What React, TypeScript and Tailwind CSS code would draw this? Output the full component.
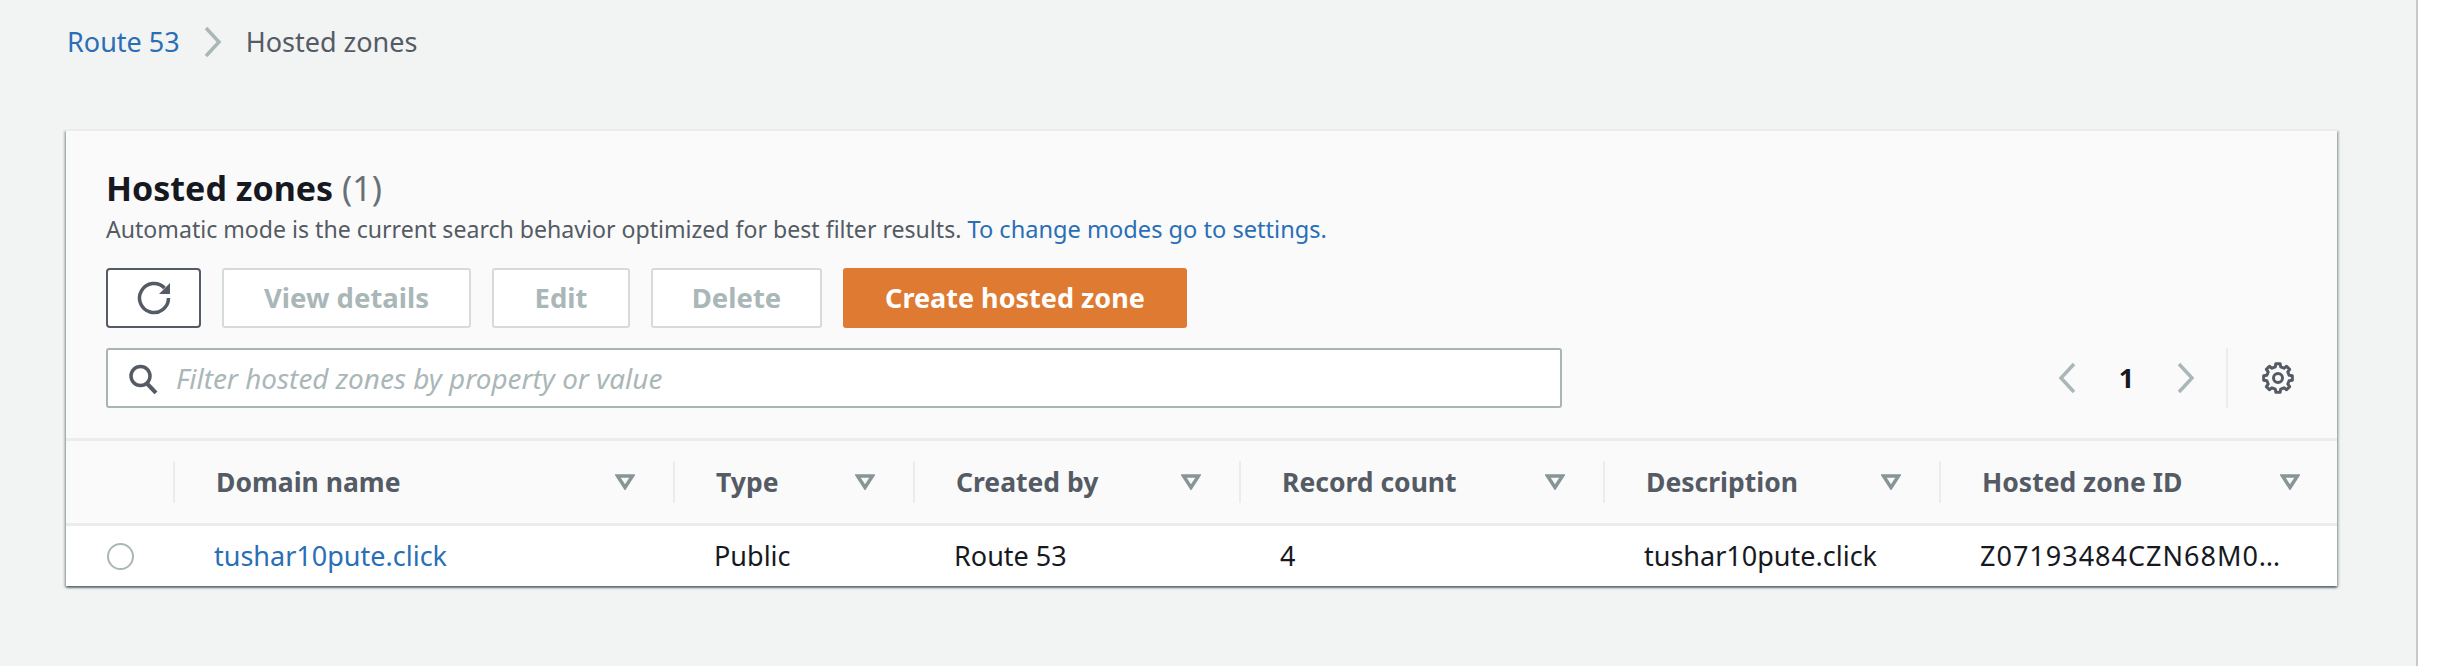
const font = "font-['Noto_Sans',sans-serif]";

function Filter() {
  return (
    <svg width="20" height="16" viewBox="0 0 20 16" className="shrink-0">
      <path d="M2.500 2h15L10 13.500z" fill="none" stroke="#879596" strokeWidth="3.500" strokeLinejoin="miter" />
    </svg>
  );
}

function Chevron({ left }: { left?: boolean }) {
  return (
    <svg width="18" height="32" viewBox="0 0 18 32" className="shrink-0">
      <path d={left ? "M16 2 3 16l13 14" : "M2 2l13 14L2 30"} fill="none" stroke="#aab7b8" strokeWidth="3.500" />
    </svg>
  );
}

function gearPath() {
  const pts: string[] = [];
  const teeth = 8;
  for (let i = 0; i < teeth; i++) {
    const a = (i / teeth) * Math.PI * 2 - Math.PI / 2;
    const step = Math.PI / teeth;
    const corners: [number, number][] = [
      [11.5, a - step * 0.6],
      [14.5, a - step * 0.38],
      [14.5, a + step * 0.38],
      [11.5, a + step * 0.6],
    ];
    for (const [r, t] of corners) {
      pts.push(`${(16 + r * Math.cos(t)).toFixed(2)} ${(16 + r * Math.sin(t)).toFixed(2)}`);
    }
  }
  return `M${pts.join("L")}Z`;
}

const cols = [
  { label: "Domain name", value: "tushar10pute.click", cls: "text-[#2a6fb5]" },
  { label: "Type", value: "Public", cls: "" },
  { label: "Created by", value: "Route 53", cls: "" },
  { label: "Record count", value: "4", cls: "" },
  { label: "Description", value: "tushar10pute.click", cls: "" },
  { label: "Hosted zone ID", value: "Z07193484CZN68M0…", cls: "tracking-[1px]" },
];

const grid = "grid grid-cols-[109px_500px_240px_326px_364px_336px_397px]";

export default function App() {
  return (
    <div className={`${font} w-[2438px] h-[666px] overflow-hidden bg-white flex text-[27px] text-[#16191f]`}>
      <main className="w-[2418px] h-[666px] shrink-0 bg-[#f2f3f3] border-r-2 border-[#c5c9c9] pl-[66px] pr-[79px]">
        <nav className="h-[130px] pb-[46px] pl-[1px] flex items-center">
          <a className="text-[#2a6fb5]">Route 53</a>
          <span className="mx-[24px]"><Chevron /></span>
          <span className="text-[#545b64]">Hosted zones</span>
        </nav>

        <section className="bg-[#fafafa] border-t border-[#eaeded] shadow-[0_2px_2px_0_rgba(0,28,36,0.5),2px_1px_2px_0_rgba(0,28,36,0.2),-2px_1px_2px_0_rgba(0,28,36,0.2)]">
          <div className="px-[40px] pt-[37px] h-[310px] border-b-[3px] border-[#eaeded]">
            <h1 className="text-[34px] leading-[40px] font-bold">
              Hosted zones <span className="font-normal text-[#687078]">(1)</span>
            </h1>
            <p className="text-[23.100px] leading-[30px] mt-[6px] text-[#545b64]">
              Automatic mode is the current search behavior optimized for best filter results.{" "}
              <a className="text-[23.600px] text-[#2a6fb5]">To change modes go to settings.</a>
            </p>
            <div className="flex mt-[24px] gap-[21px] h-[60px]">
              <button className="w-[95px] bg-white border-2 border-[#545b64] rounded-[4px] flex items-center justify-center">
                <svg width="36" height="36" viewBox="0 0 36 36" fill="none">
                  <path d="M28.500 8A14.500 14.500 0 1 0 32.500 18" stroke="#545b64" strokeWidth="3.500" />
                  <path d="M34 3v11H23z" fill="#545b64" />
                </svg>
              </button>
              <button className="w-[249px] bg-white border-2 border-[#d5dbdb] rounded-[3px] font-bold text-[27.500px] text-[#aab7b8]">View details</button>
              <button className="w-[138px] bg-white border-2 border-[#d5dbdb] rounded-[3px] font-bold text-[27.500px] text-[#aab7b8]">Edit</button>
              <button className="w-[171px] bg-white border-2 border-[#d5dbdb] rounded-[3px] font-bold text-[27.500px] text-[#aab7b8]">Delete</button>
              <button className="w-[344px] bg-[#df7a33] rounded-[3px] font-bold text-white">Create hosted zone</button>
            </div>
            <div className="flex items-center mt-[20px]">
              <div className="w-[1456px] h-[60px] bg-white border-2 border-[#a9b5b5] rounded-[3px] flex items-center pl-[20px]">
                <svg width="32" height="32" viewBox="0 0 32 32" fill="none" className="shrink-0">
                  <circle cx="12.500" cy="14" r="9.500" stroke="#545b64" strokeWidth="3.500" />
                  <path d="M18.500 21l9.500 10" stroke="#545b64" strokeWidth="4" />
                </svg>
                <span className="ml-[16px] pt-[1px] italic text-[27.900px] text-[#aab7b8]">Filter hosted zones by property or value</span>
              </div>
              <div className="ml-auto mr-[3px] flex items-center">
                <Chevron left />
                <span className="font-bold w-[101px] text-center">1</span>
                <Chevron />
                <span className="w-[2px] h-[60px] bg-[#eaeded] ml-[31px]" />
                <svg width="32" height="32" viewBox="0 0 32 32" fill="none" className="ml-[34px]">
                  <path d={gearPath()} stroke="#545b64" strokeWidth="3" strokeLinejoin="round" />
                  <circle cx="16" cy="16" r="4.500" stroke="#545b64" strokeWidth="3" />
                </svg>
              </div>
            </div>
          </div>

          <div className={`${grid} h-[85px] border-b-[3px] border-[#eaeded] items-center`}>
            <div className="h-[42px] border-r-2 border-[#eaeded]" />
            {cols.map((c, i) => (
              <div
                key={c.label}
                className={`flex items-center justify-between h-[42px] pl-[41px] pr-[38px] font-bold text-[26.500px] text-[#545b64] ${i < 5 ? "border-r-2 border-[#eaeded]" : ""}`}
              >
                <span className="pt-[1px]">{c.label}</span>
                <Filter />
              </div>
            ))}
          </div>

          <div className={`${grid} h-[60px] bg-white items-center`}>
            <div className="pl-[41px]">
              <span className="block w-[27px] h-[27px] rounded-full border-2 border-[#aab7b8] bg-white" />
            </div>
            {cols.map((c) => (
              <div key={c.label} className={`pl-[39px] whitespace-nowrap ${c.cls}`}>
                {c.value}
              </div>
            ))}
          </div>
        </section>
      </main>
    </div>
  );
}
